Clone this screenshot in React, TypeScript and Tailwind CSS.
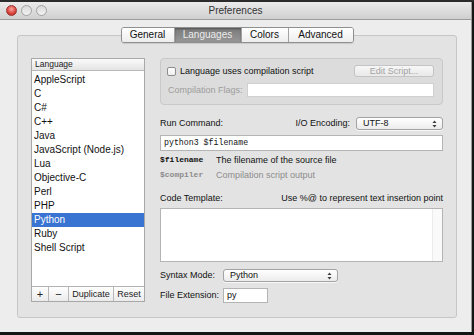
const LANGUAGES = [
  "AppleScript",
  "C",
  "C#",
  "C++",
  "Java",
  "JavaScript (Node.js)",
  "Lua",
  "Objective-C",
  "Perl",
  "PHP",
  "Python",
  "Ruby",
  "Shell Script",
];

const TABS = [
  { label: "General", w: "w-[53px]" },
  { label: "Languages", w: "w-[67px]", active: true },
  { label: "Colors", w: "w-[47px]" },
  { label: "Advanced", w: "w-[64px]" },
];

function Stepper() {
  return (
    <svg width="5" height="8" viewBox="0 0 5 8" className="shrink-0">
      <path d="M2.5 0.5 L4.5 3 L0.5 3 Z" fill="#3a3a3a" />
      <path d="M2.5 7.5 L4.5 5 L0.5 5 Z" fill="#3a3a3a" />
    </svg>
  );
}

function Select({ value, className }: { value: string; className: string }) {
  return (
    <div
      className={`flex items-center justify-between h-[13px] rounded-[3px] border border-[#a3a3a3] bg-gradient-to-b from-white to-[#ececec] pl-[6px] pr-[5px] text-[9px] text-[#111] shadow-[0_1px_0_rgba(255,255,255,0.7)] ${className}`}
    >
      <span className="leading-none">{value}</span>
      <Stepper />
    </div>
  );
}

export default function App() {
  return (
    <div className="w-[474px] h-[335px] bg-[#151515] overflow-hidden font-['Liberation_Sans',Arial,sans-serif]">
      <div className="h-[2px] bg-[#2b2b2b]" />
      <div className="w-[472px] h-[330px] flex flex-col bg-[#ededed] border-r border-[#9a9a9a]">
        {/* Title bar */}
        <div className="h-[18px] shrink-0 grid grid-cols-[1fr_auto_1fr] items-center bg-gradient-to-b from-[#ebebeb] to-[#cfcfcf] border-b border-[#9d9d9d]">
          <div className="flex items-center gap-[4px] pl-[6px]">
            <span className="w-[11px] h-[11px] rounded-full bg-[radial-gradient(circle_at_50%_35%,#f7a5a0,#d8403a_60%,#a92a25)] border border-[#9b3330]" />
            <span className="w-[11px] h-[11px] rounded-full bg-gradient-to-b from-[#d8d8d8] to-[#f2f2f2] border border-[#a2a2a2]" />
            <span className="w-[11px] h-[11px] rounded-full bg-gradient-to-b from-[#d8d8d8] to-[#f2f2f2] border border-[#a2a2a2]" />
          </div>
          <span className="text-[10px] text-[#333] leading-none">Preferences</span>
          <div />
        </div>

        {/* Body */}
        <div className="flex-1 flex flex-col pl-[17px] pr-[14px]">
          <div className="relative z-10 mt-[7px] flex justify-center">
            <div className="flex h-[16px] rounded-[3px] border border-[#8f8f8f] overflow-hidden shadow-[0_1px_1px_rgba(0,0,0,0.12)]">
              {TABS.map((t, i) => (
                <div
                  key={t.label}
                  className={`${t.w} flex items-center justify-center text-[10px] leading-none ${
                    i < TABS.length - 1 ? "border-r border-[#a2a2a2]" : ""
                  } ${
                    t.active
                      ? "bg-gradient-to-b from-[#7a7a7a] to-[#979797] text-[#ececec] shadow-[inset_0_1px_2px_rgba(0,0,0,0.35)]"
                      : "bg-gradient-to-b from-white to-[#ededed] text-[#111]"
                  }`}
                >
                  {t.label}
                </div>
              ))}
            </div>
          </div>

          {/* Group box */}
          <div className="-mt-[8px] h-[283px] rounded-[3px] border border-[#c6c6c6] bg-[#e3e3e3] flex gap-[15px] pt-[22px] px-[13px]">
            {/* Language list */}
            <div className="w-[114px] h-[244px] shrink-0 flex flex-col border border-[#a8a8a8] bg-white">
              <div className="h-[12px] shrink-0 flex items-center pl-[3px] border-b border-[#b9b9b9] bg-gradient-to-b from-[#fafafa] to-[#e4e4e4] text-[8.5px] text-[#222] leading-none">
                Language
              </div>
              <div className="flex-1 flex flex-col pt-[2px]">
                {LANGUAGES.map((lang) => (
                  <div
                    key={lang}
                    className={`h-[14px] flex items-center pl-[2px] text-[10px] leading-none ${
                      lang === "Python" ? "bg-[#3a74d3] text-white" : "text-[#111]"
                    }`}
                  >
                    {lang}
                  </div>
                ))}
              </div>
              <div className="h-[15px] shrink-0 flex border-t border-[#b3b3b3] text-[9px] text-[#222] leading-none">
                <div className="w-[17px] flex items-center justify-center border-r border-[#b8b8b8] bg-gradient-to-b from-white to-[#ebebeb] text-[11px]">
                  +
                </div>
                <div className="w-[20px] flex items-center justify-center border-r border-[#b8b8b8] bg-gradient-to-b from-white to-[#ebebeb] text-[11px]">
                  −
                </div>
                <div className="w-[45px] flex items-center justify-center border-r border-[#b8b8b8] bg-gradient-to-b from-white to-[#ebebeb]">
                  Duplicate
                </div>
                <div className="flex-1 flex items-center justify-center bg-gradient-to-b from-white to-[#ebebeb]">
                  Reset
                </div>
              </div>
            </div>

            {/* Settings column */}
            <div className="flex-1 flex flex-col">
              <div className="h-[47px] shrink-0 rounded-[4px] border border-[#c9c9c9] bg-[#dcdcdc] flex flex-col pt-[6px] pl-[6px] pr-[8px]">
                <div className="h-[12px] flex items-center justify-between">
                  <div className="flex items-center gap-[4px]">
                    <span className="w-[9px] h-[9px] rounded-[2px] border border-[#8d8d8d] bg-gradient-to-b from-white to-[#ededed]" />
                    <span className="text-[9px] text-[#111] leading-none">Language uses compilation script</span>
                  </div>
                  <div className="w-[80px] h-[12px] flex items-center justify-center rounded-[3px] border border-[#c4c4c4] bg-gradient-to-b from-[#f7f7f7] to-[#e9e9e9] text-[9px] text-[#a2a2a2] leading-none">
                    Edit Script...
                  </div>
                </div>
                <div className="mt-[6px] h-[14px] flex items-center justify-between pl-[1px]">
                  <span className="text-[9px] text-[#9c9c9c] leading-none">Compilation Flags:</span>
                  <div className="w-[187px] h-[14px] border border-[#d0d0d0] bg-white" />
                </div>
              </div>

              <div className="mt-[12px] h-[13px] flex items-center justify-between text-[9px] text-[#111] leading-none">
                <span>Run Command:</span>
                <div className="flex items-center gap-[6px]">
                  <span>I/O Encoding:</span>
                  <Select value="UTF-8" className="w-[87px]" />
                </div>
              </div>

              <div className="mt-[5px] h-[16px] flex items-center border border-[#b4b4b4] bg-white pl-[3px] font-['Liberation_Mono',monospace] text-[8.25px] text-[#111] leading-none">
                python3 $filename
              </div>

              <div className="mt-[3px] h-[12px] flex items-center text-[#111] leading-none">
                <span className="w-[56px] font-['Liberation_Mono',monospace] font-bold text-[8px]">$filename</span>
                <span className="text-[9px]">The filename of the source file</span>
              </div>
              <div className="mt-[3px] h-[12px] flex items-center text-[#8c8c8c] leading-none">
                <span className="w-[56px] font-['Liberation_Mono',monospace] font-bold text-[8px]">$compiler</span>
                <span className="text-[9px]">Compilation script output</span>
              </div>

              <div className="mt-[11px] h-[12px] flex items-center justify-between text-[9px] text-[#111] leading-none">
                <span>Code Template:</span>
                <span>Use %@ to represent text insertion point</span>
              </div>

              <div className="mt-[4px] h-[54px] flex border border-[#b4b4b4] bg-white">
                <div className="flex-1" />
                <div className="w-[10px] border-l border-[#ececec] bg-[#fafafa]" />
              </div>

              <div className="mt-[7px] h-[13px] flex items-center text-[9px] text-[#111] leading-none">
                <span className="w-[63px]">Syntax Mode:</span>
                <Select value="Python" className="w-[115px]" />
              </div>

              <div className="mt-[6px] h-[15px] flex items-center text-[9px] text-[#111] leading-none">
                <span className="w-[63px]">File Extension:</span>
                <div className="w-[45px] h-[15px] flex items-center border border-[#b4b4b4] bg-white pl-[3px]">
                  py
                </div>
              </div>
            </div>
          </div>
        </div>
      </div>
    </div>
  );
}
